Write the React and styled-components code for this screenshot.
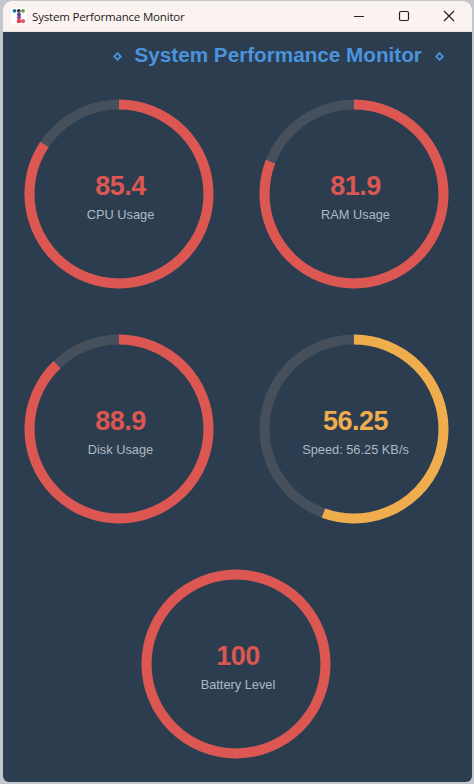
import React from "react";
import styled, { createGlobalStyle } from "styled-components";

const Global = createGlobalStyle`
  html, body { margin: 0; padding: 0; background: #c9ccd0; }
  #root { width: 474px; height: 784px; overflow: hidden; }
`;

const Desktop = styled.div`
  width: 474px;
  height: 784px;
  padding: 1px 2px 2px 3px;
  box-sizing: border-box;
  background: #c4c8cc;
`;

const Window = styled.div`
  width: 469px;
  height: 781px;
  border-radius: 8px 8px 6px 6px;
  overflow: hidden;
  display: flex;
  flex-direction: column;
  background: #2c3d4f;
`;

const TitleBar = styled.div`
  flex: 0 0 30px;
  display: flex;
  align-items: center;
  padding-left: 8px;
  background: #fbf3ef;
  border-bottom: 1px solid #e8e4e2;
  box-sizing: border-box;
`;

const AppIcon = styled.svg`
  width: 16px;
  height: 16px;
  flex: none;
`;

const WindowTitle = styled.span`
  margin-left: 5px;
  flex: 1;
  font: 400 11.5px "Open Sans", "Noto Sans", sans-serif;
  letter-spacing: -0.18px;
  color: #1c1c1c;
`;

const Controls = styled.div`
  display: flex;
  align-items: center;
  margin-right: 1px;
`;

const ControlButton = styled.div`
  width: 45px;
  height: 30px;
  display: flex;
  align-items: center;
  justify-content: center;
  color: #222;
`;

const Content = styled.main`
  flex: 1;
  display: flex;
  flex-direction: column;
`;

const Heading = styled.h1`
  margin: 0;
  height: 45px;
  padding-left: 109.5px;
  display: flex;
  align-items: center;
  gap: 13px;
  font: 700 20.7px "Liberation Sans", Arial, sans-serif;
  color: #4a94de;
  white-space: nowrap;
`;

const Bullet = styled.svg`
  width: 9px;
  height: 9px;
  margin-top: 4px;
  flex: none;
`;

const Grid = styled.div`
  display: flex;
  flex-wrap: wrap;
  justify-content: center;
  gap: 45px;
  padding-top: 22px;
  margin-left: -3px;
`;

const GaugeBox = styled.div`
  position: relative;
  width: 190px;
  height: 190px;
`;

const Ring = styled.svg`
  display: block;
  width: 190px;
  height: 190px;
`;

const GaugeText = styled.div`
  position: absolute;
  inset: 0;
  display: flex;
  flex-direction: column;
  align-items: center;
  justify-content: center;
  padding: 6px 0 0 4px;
`;

const Value = styled.div`
  font: 700 27px/30px "Liberation Sans", Arial, sans-serif;
  letter-spacing: -0.5px;
  color: ${(p) => p.$color};
`;

const Label = styled.div`
  margin-top: 6px;
  font: 400 12.8px/16px "Liberation Sans", Arial, sans-serif;
  color: #aeb9c4;
`;

const RED = "#dc5652";
const ORANGE = "#f0ad4e";
const R = 89.5;
const C = 2 * Math.PI * R;
const ARC_SCALE = 0.986;

function Gauge({ value, percent, label, color }) {
  const share = percent >= 100 ? 100 : percent * ARC_SCALE;
  return (
    <GaugeBox>
      <Ring viewBox="0 0 190 190">
        <circle cx="95" cy="95" r={R} fill="none" stroke="#45505c" strokeWidth="10" />
        <circle
          cx="95"
          cy="95"
          r={R}
          fill="none"
          stroke={color}
          strokeWidth="10"
          strokeDasharray={`${(C * share) / 100} ${C}`}
          transform="rotate(-90 95 95)"
        />
      </Ring>
      <GaugeText>
        <Value $color={color}>{value}</Value>
        <Label>{label}</Label>
      </GaugeText>
    </GaugeBox>
  );
}

const Diamond = () => (
  <Bullet viewBox="0 0 9 9">
    <path d="M4.5 1.2L7.8 4.5L4.5 7.8L1.2 4.5Z" fill="none" stroke="#4a94de" strokeWidth="1.8" />
  </Bullet>
);

export default function App() {
  return (
    <>
      <Global />
      <Desktop>
        <Window>
          <TitleBar>
            <AppIcon viewBox="0 0 16 16">
              <rect width="16" height="16" fill="#fff" />
              <circle cx="3.5" cy="2.8" r="1.9" fill="#2f6f9f" />
              <circle cx="7.8" cy="2.8" r="1.9" fill="#333b46" />
              <circle cx="12" cy="2.8" r="1.9" fill="#6f9a3a" />
              <circle cx="8" cy="6.5" r="2" fill="#5b4a8a" />
              <circle cx="8" cy="9.6" r="2" fill="#9a3f8f" />
              <circle cx="8" cy="13.2" r="2.1" fill="#e0393e" />
              <circle cx="12" cy="13.2" r="2.1" fill="#e2586a" />
            </AppIcon>
            <WindowTitle>System Performance Monitor</WindowTitle>
            <Controls>
              <ControlButton>
                <svg width="12" height="12" viewBox="0 0 12 12"><path d="M1 6.5h10" stroke="currentColor" strokeWidth="1.2" /></svg>
              </ControlButton>
              <ControlButton>
                <svg width="12" height="12" viewBox="0 0 12 12"><rect x="1.5" y="1.5" width="9" height="9" rx="1.5" fill="none" stroke="currentColor" strokeWidth="1.2" /></svg>
              </ControlButton>
              <ControlButton>
                <svg width="12" height="12" viewBox="0 0 12 12"><path d="M1 1l10 10M11 1L1 11" stroke="currentColor" strokeWidth="1.2" /></svg>
              </ControlButton>
            </Controls>
          </TitleBar>
          <Content>
            <Heading>
              <Diamond />
              System Performance Monitor
              <Diamond />
            </Heading>
            <Grid>
              <Gauge value="85.4" percent={85.4} label="CPU Usage" color={RED} />
              <Gauge value="81.9" percent={81.9} label="RAM Usage" color={RED} />
              <Gauge value="88.9" percent={88.9} label="Disk Usage" color={RED} />
              <Gauge value="56.25" percent={56.25} label="Speed: 56.25 KB/s" color={ORANGE} />
              <Gauge value="100" percent={100} label="Battery Level" color={RED} />
            </Grid>
          </Content>
        </Window>
      </Desktop>
    </>
  );
}
